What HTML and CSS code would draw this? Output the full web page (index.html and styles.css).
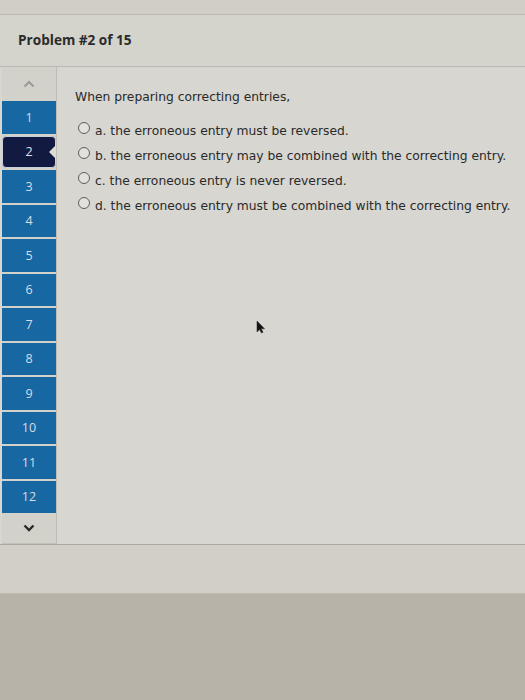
FILE: index.html
```html
<!DOCTYPE html>
<html>
<head>
<meta charset="utf-8">
<link rel="stylesheet" href="styles.css">
</head>
<body>
<div class="screen">
  <div class="topstrip"></div>
  <div class="header"><span class="title">Problem #2 of 15</span></div>
  <div class="main">
    <div class="sidebar">
      <div class="nav-btn up"><svg width="12" height="8" viewBox="0 0 12 8"><path d="M1.5 6.5 L6 2 L10.5 6.5" fill="none" stroke="#9a9a96" stroke-width="2"/></svg></div>
      <div class="items">
        <div class="item">1</div>
        <div class="item current">2<span class="notch"></span></div>
        <div class="item">3</div>
        <div class="item">4</div>
        <div class="item">5</div>
        <div class="item">6</div>
        <div class="item">7</div>
        <div class="item">8</div>
        <div class="item">9</div>
        <div class="item">10</div>
        <div class="item">11</div>
        <div class="item">12</div>
      </div>
      <div class="nav-btn down"><svg width="12" height="8" viewBox="0 0 12 8"><path d="M1.5 1.5 L6 6 L10.5 1.5" fill="none" stroke="#2a2a2a" stroke-width="2.4"/></svg></div>
    </div>
    <div class="content">
      <p class="question">When preparing correcting entries,</p>
      <ul class="options">
        <li><span class="radio"></span><span>a. the erroneous entry must be reversed.</span></li>
        <li><span class="radio"></span><span>b. the erroneous entry may be combined with the correcting entry.</span></li>
        <li><span class="radio"></span><span>c. the erroneous entry is never reversed.</span></li>
        <li><span class="radio"></span><span>d. the erroneous entry must be combined with the correcting entry.</span></li>
      </ul>
      <svg class="cursor" width="10" height="14" viewBox="0 0 10 14"><path d="M1 1 L1 12 L3.5 9.5 L5.5 13 L7 12.3 L5.2 8.8 L8.5 8.8 Z" fill="#111" stroke="#333" stroke-width="0.6"/></svg>
    </div>
  </div>
  <div class="footer"></div>
  <div class="below"></div>
</div>
</body>
</html>
```
FILE: styles.css
```css
html, body {
  margin: 0;
  padding: 0;
}
body {
  width: 525px;
  height: 700px;
  overflow: hidden;
  background: #b9b5ac;
  font-family: "DejaVu Sans", Verdana, sans-serif;
}
.screen {
  display: flex;
  flex-direction: column;
  height: 700px;
}
.topstrip {
  height: 14px;
  background: #d0cec7;
  border-bottom: 1px solid #bdbbb4;
}
.header {
  height: 51px;
  background: #d4d3cc;
  border-bottom: 1px solid #b9b8b1;
  display: flex;
  align-items: center;
  padding-left: 18px;
}
.title {
  font-family: "Open Sans", sans-serif;
  font-weight: 700;
  font-size: 13.6px;
  color: #2b2b2b;
  margin-top: -2px;
}
.main {
  display: flex;
  height: 477px;
  background: #d7d6d0;
  border-bottom: 1px solid #a9a8a1;
}
.sidebar {
  width: 54px;
  margin-left: 2px;
  border-right: 1px solid #bdbcb5;
  display: flex;
  flex-direction: column;
  background: #d2d1ca;
}
.nav-btn {
  display: flex;
  align-items: center;
  justify-content: center;
}
.nav-btn.up {
  height: 34px;
}
.nav-btn.down {
  height: 30px;
  border-bottom: 1px solid #c2c1ba;
}
.items {
  display: flex;
  flex-direction: column;
  gap: 2px;
}
.item {
  position: relative;
  height: 32.5px;
  background: #1767a3;
  color: #d7dde6;
  font-family: "Open Sans", sans-serif;
  font-size: 12.5px;
  display: flex;
  align-items: center;
  justify-content: center;
}
.item.current {
  background: #131a42;
  color: #e0e2ea;
  border: 1px solid #c8d0dc;
  border-radius: 4px;
  box-sizing: border-box;
}
.notch {
  position: absolute;
  right: -1px;
  top: 50%;
  margin-top: -7px;
  width: 0;
  height: 0;
  border-top: 7px solid transparent;
  border-bottom: 7px solid transparent;
  border-right: 7px solid #dcdbd5;
}
.content {
  position: relative;
  flex: 1;
  padding: 21px 0 0 18px;
  color: #2a2a2a;
  font-size: 12.3px;
}
.question {
  margin: 0 0 16px 0;
  line-height: 18px;
}
.options {
  list-style: none;
  margin: 0;
  padding: 0 0 0 3px;
  display: flex;
  flex-direction: column;
  gap: 7px;
}
.options li {
  display: flex;
  align-items: center;
  gap: 5px;
  line-height: 18px;
}
.radio {
  width: 10px;
  height: 10px;
  border: 1.5px solid #5d5d5d;
  border-radius: 50%;
  background: #e2e1dc;
  margin-top: -6px;
  flex: none;
}
.cursor {
  position: absolute;
  left: 199px;
  top: 253px;
}
.footer {
  height: 48px;
  background: #d1cfc7;
  border-bottom: 1px solid #bdb9b0;
}
.below {
  flex: 1;
  background: #b8b3a9;
}
```
